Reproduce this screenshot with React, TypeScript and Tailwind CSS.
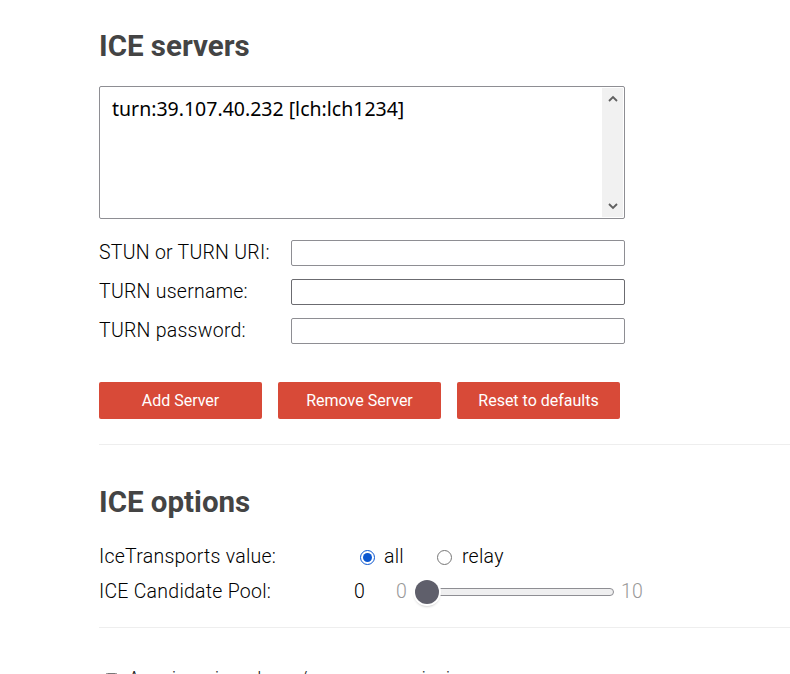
import React from 'react'

const fields = ['STUN or TURN URI:', 'TURN username:', 'TURN password:']
const buttons = ['Add Server', 'Remove Server', 'Reset to defaults']

function Chevron({ up }: { up?: boolean }) {
  return (
    <svg width="10" height="7" viewBox="0 0 10 7" className="text-[#606060]">
      <path
        d={up ? 'M1 6 L5 2 L9 6' : 'M1 1 L5 5 L9 1'}
        fill="none"
        stroke="currentColor"
        strokeWidth="1.8"
      />
    </svg>
  )
}

export default function App() {
  return (
    <div className="min-h-screen bg-white pl-[99px] pt-[26px] font-['Roboto',sans-serif] text-[#222] overflow-hidden">
      <h2 className="text-[29.5px] font-bold leading-[40px] text-[#444]">ICE servers</h2>

      <div className="mt-[20px] flex h-[133px] w-[526px] rounded-[2px] border border-[#8e8e93] bg-white">
        <div className="flex-1 pl-[12px] pt-[9px] font-['Noto_Sans',sans-serif] text-[19.5px] leading-[26px] text-black">
          turn:39.107.40.232 [lch:lch1234]
        </div>
        <div className="my-[1px] mr-[1px] flex w-[21px] flex-col items-center justify-between bg-[#f1f1f1] py-[7px]">
          <Chevron up />
          <Chevron />
        </div>
      </div>

      <div className="mt-[21px] flex flex-col gap-[13px]">
        {fields.map((f, i) => (
          <div key={f} className="flex items-center">
            <label className="w-[192px] text-[19.5px] font-light leading-[26px] tracking-[0.25px] text-black">{f}</label>
            <div
              className={
                'h-[26px] w-[334px] rounded-[2px] border bg-white ' +
                (i === 1 ? 'border-[#6b6b70]' : 'border-[#8e8e93]')
              }
            />
          </div>
        ))}
      </div>

      <div className="mt-[38px] flex gap-[16px]">
        {buttons.map((b) => (
          <button
            key={b}
            className="h-[37px] w-[163px] rounded-[2px] bg-[#d84a38] text-[16px] font-normal text-white"
          >
            {b}
          </button>
        ))}
      </div>

      <hr className="mt-[25px] w-[800px] border-t border-[#eeeeee]" />

      <h2 className="mt-[37px] text-[29.5px] font-bold leading-[40px] text-[#444]">ICE options</h2>

      <div className="mt-[22px] flex h-[26px] items-center text-[19.5px] font-light leading-[26px] tracking-[0.25px] text-black">
        <span className="w-[261px]">IceTransports value:</span>
        <label className="flex items-center gap-[9px]">
          <input type="radio" name="t" defaultChecked className="m-0 h-[15px] w-[15px] accent-[#0b57d0]" />
          all
        </label>
        <label className="ml-[33px] flex items-center gap-[10px]">
          <input type="radio" name="t" className="m-0 h-[15px] w-[15px]" />
          relay
        </label>
      </div>

      <div className="mt-[9px] flex h-[26px] items-center text-[19.5px] font-light leading-[26px] tracking-[0.25px] text-black">
        <span className="w-[255px]">ICE Candidate Pool:</span>
        <span className="w-[42px]">0</span>
        <span className="w-[11px] text-[#999]">0</span>
        <div className="relative ml-[8px] h-[24px] w-[199px]">
          <div className="absolute left-[2px] right-0 top-[8px] h-[8px] rounded-full border border-[#8e8e93] bg-[#efeff0]" />
          <div className="absolute left-0 top-0 h-[24px] w-[24px] rounded-full bg-[#5f5f6b] shadow-[0_2px_3px_rgba(0,0,0,0.35)] ring-2 ring-white" />
        </div>
        <span className="ml-[7px] text-[#999]">10</span>
      </div>

      <hr className="mt-[22px] w-[800px] border-t border-[#eeeeee]" />

      <label className="mt-[37px] ml-[6px] flex items-center gap-[10px] text-[19.5px] font-light">
        <input type="checkbox" className="m-0 h-[13px] w-[13px]" />
        Acquire microphone/camera permissions
      </label>
    </div>
  )
}
